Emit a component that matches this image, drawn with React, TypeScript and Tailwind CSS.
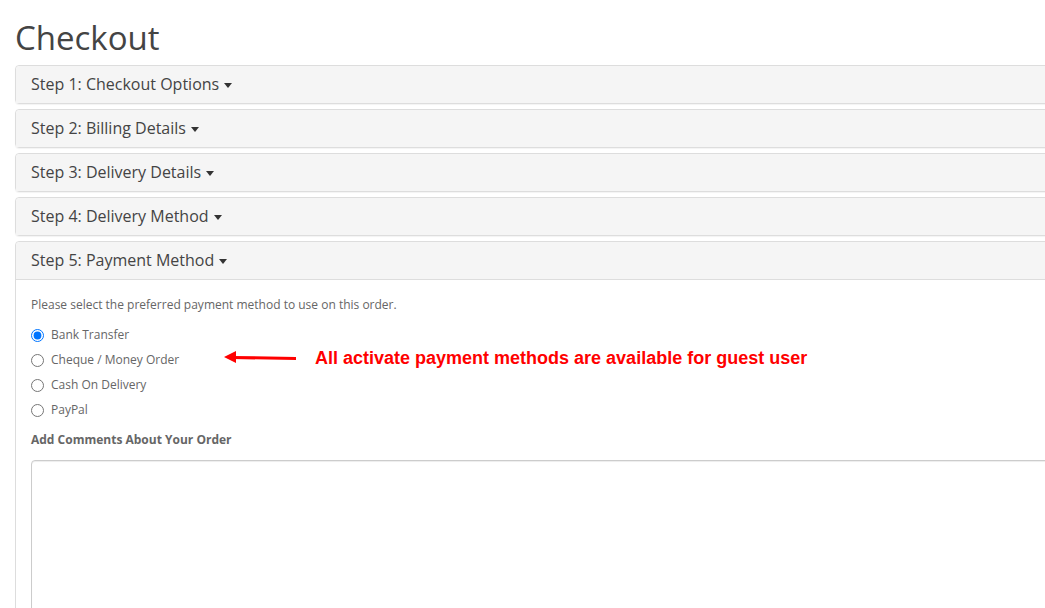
// Checkout page: accordion of steps with the payment step open,
// plus a red review annotation pointing at the payment options.

const steps = [
  'Step 1: Checkout Options',
  'Step 2: Billing Details',
  'Step 3: Delivery Details',
  'Step 4: Delivery Method',
];

const methods = ['Bank Transfer', 'Cheque / Money Order', 'Cash On Delivery', 'PayPal'];

function Caret() {
  return (
    <span className="ml-[5px] inline-block h-0 w-0 border-x-[4px] border-t-[5px] border-x-transparent border-t-[#333] align-middle" />
  );
}

function Heading({ title }: { title: string }) {
  return (
    <div className="rounded-t-[4px] bg-[#f5f5f5] px-[15px] py-[10px] text-[16px] leading-[17px] text-[#444]">
      {title}
      <Caret />
    </div>
  );
}

export default function App() {
  return (
    <div className="h-[608px] w-[1045px] overflow-hidden bg-white font-['Open_Sans',sans-serif] text-[12px] leading-[20px] text-[#666]">
      <div className="w-[1160px] pl-[15px]">
        <h1 className="mb-[9px] mt-[20px] text-[33px] leading-[36px] text-[#444]">Checkout</h1>

        <div className="flex flex-col gap-[5px]">
          {steps.map((s) => (
            <div key={s} className="rounded-[4px] border border-[#ddd] shadow-[0_1px_1px_rgba(0,0,0,0.05)]">
              <Heading title={s} />
            </div>
          ))}

          <div className="rounded-[4px] border border-[#ddd]">
            <div className="border-b border-[#ddd]">
              <Heading title="Step 5: Payment Method" />
            </div>
            <div className="relative p-[15px]">
              <p className="mb-[10px]">Please select the preferred payment method to use on this order.</p>
              <div className="mb-[10px] mt-[10px] flex flex-col gap-[5px]">
                {methods.map((m, i) => (
                  <label key={m} className="flex h-[20px] items-center">
                    <input
                      type="radio"
                      name="payment"
                      defaultChecked={i === 0}
                      className="m-0 h-[13px] w-[13px] accent-[#0075ff]"
                    />
                    <span className="ml-[7px]">{m}</span>
                  </label>
                ))}
              </div>
              <p className="mb-[10px] font-bold">Add Comments About Your Order</p>
              <textarea
                rows={8}
                className="block h-[170px] w-full resize-none rounded-[4px] border border-[#ccc] shadow-[inset_0_1px_1px_rgba(0,0,0,0.075)]"
              />

              {/* review annotation */}
              <div className="absolute left-[208px] top-[68px] flex items-center gap-[18px]">
                <svg width="73" height="16" viewBox="0 0 73 16">
                  <line x1="8" y1="7.5" x2="72" y2="8.5" stroke="#f00" strokeWidth="3" />
                  <polygon points="0,7 12,1 12,13" fill="#f00" />
                </svg>
                <span className="font-['Liberation_Sans',Arial,sans-serif] text-[18px] font-bold leading-[20px] text-[#f00]">
                  All activate payment methods are available for guest user
                </span>
              </div>
            </div>
          </div>
        </div>
      </div>
    </div>
  );
}
